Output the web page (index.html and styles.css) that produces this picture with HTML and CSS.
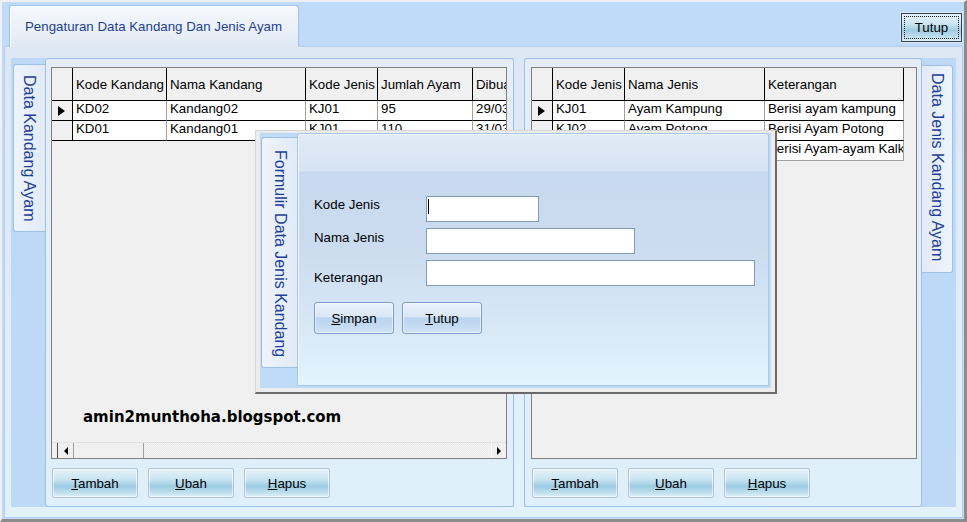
FILE: index.html
```html
<!DOCTYPE html>
<html>
<head>
<meta charset="utf-8">
<title>Pengaturan Data Kandang Dan Jenis Ayam</title>
<link rel="stylesheet" href="styles.css">
</head>
<body>
<div class="window">
  <div class="topbar">
    <div class="ttab">Pengaturan Data Kandang Dan Jenis Ayam</div>
    <div class="btn-close"><div class="btn-face"><span class="focus">Tutup</span></div></div>
  </div>
  <div class="main">
    <div class="half half-l">
      <div class="vstrip vstrip-l"><div class="vtab vtab-l">Data Kandang Ayam</div></div>
      <div class="page page-l">
        <div class="grid">
          <div class="grow ghead">
            <div class="c ind w21"></div>
            <div class="c w94">Kode Kandang</div>
            <div class="c w139">Nama Kandang</div>
            <div class="c w72">Kode Jenis</div>
            <div class="c w95">Jumlah Ayam</div>
            <div class="c w95">Dibuat</div>
          </div>
          <div class="grow">
            <div class="c ind w21"><span class="arrow"></span></div>
            <div class="c w94">KD02</div>
            <div class="c w139">Kandang02</div>
            <div class="c w72">KJ01</div>
            <div class="c w95">95</div>
            <div class="c w95">29/03/2012</div>
          </div>
          <div class="grow">
            <div class="c ind w21"></div>
            <div class="c w94">KD01</div>
            <div class="c w139">Kandang01</div>
            <div class="c w72">KJ01</div>
            <div class="c w95">110</div>
            <div class="c w95">31/03/2012</div>
          </div>
          <div class="filler"><span class="wm">amin2munthoha.blogspot.com</span></div>
          <div class="hscroll">
            <div class="sb-gap"></div>
            <div class="sb-btn sb-btn-l"><span class="arr-l"></span></div>
            <div class="sb-thumb"></div>
            <div class="sb-track"></div>
            <div class="sb-btn sb-btn-r"><span class="arr-r"></span></div>
          </div>
        </div>
        <div class="btnrow">
          <div class="btn"><span><u>T</u>ambah</span></div>
          <div class="btn"><span><u>U</u>bah</span></div>
          <div class="btn"><span><u>H</u>apus</span></div>
        </div>
      </div>
    </div>
    <div class="half half-r">
      <div class="page page-r">
        <div class="grid">
          <div class="grow ghead">
            <div class="c ind w21"></div>
            <div class="c w72">Kode Jenis</div>
            <div class="c w140">Nama Jenis</div>
            <div class="c w139">Keterangan</div>
          </div>
          <div class="grow">
            <div class="c ind w21"><span class="arrow"></span></div>
            <div class="c w72">KJ01</div>
            <div class="c w140">Ayam Kampung</div>
            <div class="c w139">Berisi ayam kampung</div>
          </div>
          <div class="grow">
            <div class="c ind w21"></div>
            <div class="c w72">KJ02</div>
            <div class="c w140">Ayam Potong</div>
            <div class="c w139">Berisi Ayam Potong</div>
          </div>
          <div class="grow last">
            <div class="c ind w21"></div>
            <div class="c w72">KJ03</div>
            <div class="c w140">Ayam Kalkun</div>
            <div class="c w139">Berisi Ayam-ayam Kalkun</div>
          </div>
          <div class="filler"></div>
        </div>
        <div class="btnrow">
          <div class="btn"><span><u>T</u>ambah</span></div>
          <div class="btn"><span><u>U</u>bah</span></div>
          <div class="btn"><span><u>H</u>apus</span></div>
        </div>
      </div>
      <div class="vstrip vstrip-r"><div class="vtab vtab-r">Data Jenis Kandang Ayam</div></div>
    </div>
  </div>

  <div class="dialog">
    <div class="dlg-body">
      <div class="dlg-strip"><div class="vtab vtab-d">Formulir Data Jenis Kandang</div></div>
      <div class="dlg-panel">
        <div class="frow">
          <div class="flabel p1">Kode Jenis</div>
          <div class="tb tb1"><span class="caret"></span></div>
        </div>
        <div class="frow">
          <div class="flabel p2">Nama Jenis</div>
          <div class="tb tb2"></div>
        </div>
        <div class="frow">
          <div class="flabel p10">Keterangan</div>
          <div class="tb tb3"></div>
        </div>
        <div class="dbtns">
          <div class="dbtn"><span><u>S</u>impan</span></div>
          <div class="dbtn"><span><u>T</u>utup</span></div>
        </div>
      </div>
    </div>
  </div>
</div>
</body>
</html>
```

FILE: styles.css
```css
* { box-sizing: border-box; }

body {
  margin: 0;
  font-family: "Liberation Sans", Arial, sans-serif;
  font-size: 13.3px;
  color: #000;
  background: #fff;
}

.window {
  position: relative;
  width: 967px;
  height: 522px;
  background: #bfdbf9;
  border-top: 2px solid #eef0f3;
  border-left: 2px solid #eef0f3;
  border-right: 3px solid #8c8c8c;
  border-bottom: 3px solid #8c8c8c;
  display: flex;
  flex-direction: column;
  overflow: hidden;
}

/* ---------- top bar ---------- */
.topbar {
  height: 44px;
  flex: none;
  display: flex;
}

.ttab {
  position: relative;
  z-index: 1;
  align-self: flex-end;
  margin-left: 7px;
  margin-bottom: -1px;
  width: 290px;
  height: 42px;
  padding-left: 15px;
  display: flex;
  align-items: center;
  border: 1px solid #a3c1e5;
  border-bottom: none;
  border-radius: 3px 3px 0 0;
  background: linear-gradient(#f6f9fd, #eaf0f8 60%, #dfe8f3);
  box-shadow: inset 1px 1px 0 #fff;
  color: #1e3f8f;
}

.btn-close {
  margin-left: auto;
  margin-right: 1px;
  margin-top: 10px;
  align-self: flex-start;
  width: 63px;
  height: 31px;
  border: 1px solid #dce8f4;
}

.btn-face {
  height: 100%;
  border: 1px solid #36424e;
  padding: 2px;
  background: linear-gradient(#e4f2fa, #cde7f4 35%, #a9d3e7 55%, #9fcce2 62%, #c0e0ef 85%, #dceff8);
}

.focus {
  display: flex;
  height: 100%;
  align-items: center;
  justify-content: center;
  border: 1px dotted #1a1a1a;
}

/* ---------- main panel ---------- */
.main {
  flex: 1;
  margin: 0 1px 1px 2px;
  border: 1px solid #b7cfea;
  background: linear-gradient(#dde7f3, #e0eef9 60%, #e2f2fb);
  padding: 11px 6px 10px 6px;
  display: flex;
  gap: 10px;
}

.half {
  display: flex;
  background: #bdd9f7;
  min-width: 0;
}
.half-l { width: 503px; flex: none; }
.half-r { flex: 1; }

.vstrip { width: 34px; flex: none; }
.vstrip-l { padding: 6px 0 0 2px; }
.vstrip-r { padding: 7px 3px 0 0; }

.vtab {
  writing-mode: vertical-rl;
  font-size: 16px;
  color: #1f3f95;
  white-space: nowrap;
  background: linear-gradient(to right, #eef4fc, #e1eaf6);
  border: 1px solid #9fbfe4;
}
.vtab-l {
  width: 32px;
  height: 168px;
  border-right: none;
  border-radius: 3px 0 0 3px;
  padding-top: 10px;
  line-height: 31px;
}
.vtab-r {
  width: 31px;
  height: 208px;
  border-left: none;
  border-radius: 0 3px 3px 0;
  padding-top: 7px;
  line-height: 30px;
  background: linear-gradient(to left, #eef4fc, #e1eaf6);
}

.page {
  flex: 1;
  min-width: 0;
  display: flex;
  flex-direction: column;
  border: 1px solid #9fc0e6;
  border-radius: 3px;
  background: linear-gradient(#e6edf7, #e1eef9 50%, #dff0fb);
}
.page-l { padding: 8px 6px 8px 5px; }
.page-r { padding: 8px 4px 8px 6px; }

/* ---------- data grid ---------- */
.grid {
  flex: 1;
  min-width: 0;
  min-height: 0;
  border: 1px solid #808080;
  background: #f0f0f0;
  display: flex;
  flex-direction: column;
  overflow: hidden;
}

.grow { display: flex; flex: none; }

.c {
  flex: none;
  height: 20px;
  border-right: 1px solid #a0a0a0;
  border-bottom: 1px solid #000;
  background: #fff;
  padding-left: 3px;
  white-space: nowrap;
  overflow: hidden;
  line-height: 16px;
}
.ghead .c {
  height: 33px;
  line-height: 34px;
  background: #f0f0f0;
  border-right-color: #000;
}
.c.ind {
  background: #f0f0f0;
  border-right-color: #000;
  padding-left: 6px;
  display: flex;
  align-items: center;
}
.last .c { border-bottom-color: #a0a0a0; }

.w21 { width: 21px; }
.w72 { width: 72px; }
.w94 { width: 94px; }
.w95 { width: 95px; }
.w139 { width: 139px; }
.w140 { width: 140px; }

.arrow {
  width: 0;
  height: 0;
  border-left: 7px solid #000;
  border-top: 5px solid transparent;
  border-bottom: 5px solid transparent;
}

.filler {
  flex: 1;
  display: flex;
  align-items: flex-end;
  padding: 0 0 16px 31px;
}

.wm {
  font-family: "DejaVu Sans", sans-serif;
  font-weight: bold;
  font-size: 15px;
  line-height: 18px;
  color: #000;
  white-space: nowrap;
}

.hscroll {
  flex: none;
  height: 16px;
  display: flex;
  background: #f0f0f0;
  border-top: 1px solid #e2e2e2;
}
.sb-gap { width: 5px; flex: none; }
.sb-btn {
  flex: none;
  display: flex;
  align-items: center;
  justify-content: center;
  background: #f0f0f0;
}
.sb-btn-l {
  width: 17px;
  border-left: 1px solid #505050;
  border-right: 1px solid #a0a0a0;
}
.sb-btn-r {
  width: 15px;
  border-left: 1px solid #fff;
}
.sb-thumb {
  width: 70px;
  flex: none;
  background: #f0f0f0;
  border-right: 1px solid #a0a0a0;
}
.sb-track {
  flex: 1;
  background: repeating-conic-gradient(#f6f6f6 0 25%, #e9e9e9 0 50%) 0 0 / 2px 2px;
}
.arr-l {
  width: 0; height: 0;
  border-right: 4px solid #000;
  border-top: 4px solid transparent;
  border-bottom: 4px solid transparent;
}
.arr-r {
  width: 0; height: 0;
  border-left: 4px solid #000;
  border-top: 4px solid transparent;
  border-bottom: 4px solid transparent;
}

/* ---------- buttons ---------- */
.btnrow {
  flex: none;
  display: flex;
  gap: 10px;
  margin-top: 9px;
  padding-left: 1px;
}

.btn {
  width: 86px;
  height: 30px;
  display: flex;
  align-items: center;
  justify-content: center;
  border: 1px solid #b3c3d3;
  border-radius: 2px;
  box-shadow: inset 0 0 0 1px rgba(255, 255, 255, 0.6);
  background: linear-gradient(#e6f3fa, #cbe6f3 35%, #a9d3e7 55%, #9dcbe1 62%, #c0e0ef 85%, #dff0f8);
}

/* ---------- dialog ---------- */
.dialog {
  position: absolute;
  left: 253px;
  top: 128px;
  width: 522px;
  height: 264px;
  z-index: 5;
  background: #ececec;
  border-top: 1px solid #d6d6d6;
  border-left: 1px solid #d6d6d6;
  border-right: 2px solid #6a6a6a;
  border-bottom: 2px solid #6a6a6a;
  padding: 2px 4px 4px 4px;
}

.dlg-body {
  height: 100%;
  display: flex;
  background: #bfdbf8;
  padding: 0 2px 2px 0;
}

.dlg-strip {
  width: 37px;
  flex: none;
  padding: 4px 0 0 1px;
}

.vtab-d {
  width: 36px;
  height: 231px;
  border-right: none;
  border-radius: 3px 0 0 3px;
  padding-top: 12px;
  line-height: 34px;
}

.dlg-panel {
  flex: 1;
  border: 1px solid #a6c6ea;
  border-radius: 3px 3px 0 0;
  box-shadow: inset 1px 1px 0 #eef6ff;
  background: linear-gradient(#e1ebf6 0, #d6e3f2 37px, #c7d9ee 38px, #cbdcf0 45%, #d6e7f6 75%, #e2f4fd 100%);
  padding: 62px 0 0 16px;
}

.frow {
  display: flex;
  height: 26px;
  margin-bottom: 6px;
}

.flabel {
  width: 112px;
  flex: none;
  line-height: 15px;
}
.p1 { padding-top: 1px; }
.p2 { padding-top: 2px; }
.p10 { padding-top: 10px; }

.tb {
  height: 26px;
  border: 1px solid #7f9db9;
  background: #fff;
  padding: 2px 0 0 1px;
}
.tb1 { width: 113px; }
.tb2 { width: 209px; }
.tb3 { width: 329px; }

.caret {
  display: block;
  width: 1px;
  height: 15px;
  background: #000;
}

.dbtns {
  display: flex;
  gap: 8px;
  margin-top: 16px;
}

.dbtn {
  width: 80px;
  height: 32px;
  display: flex;
  align-items: center;
  justify-content: center;
  border: 1px solid #7b9ec9;
  border-radius: 3px;
  box-shadow: inset 0 0 0 1px rgba(255, 255, 255, 0.5);
  background: linear-gradient(#e9f1fb, #dae7f6 45%, #bcd5ef 50%, #c3daf1 75%, #d0e4f6);
}
```
